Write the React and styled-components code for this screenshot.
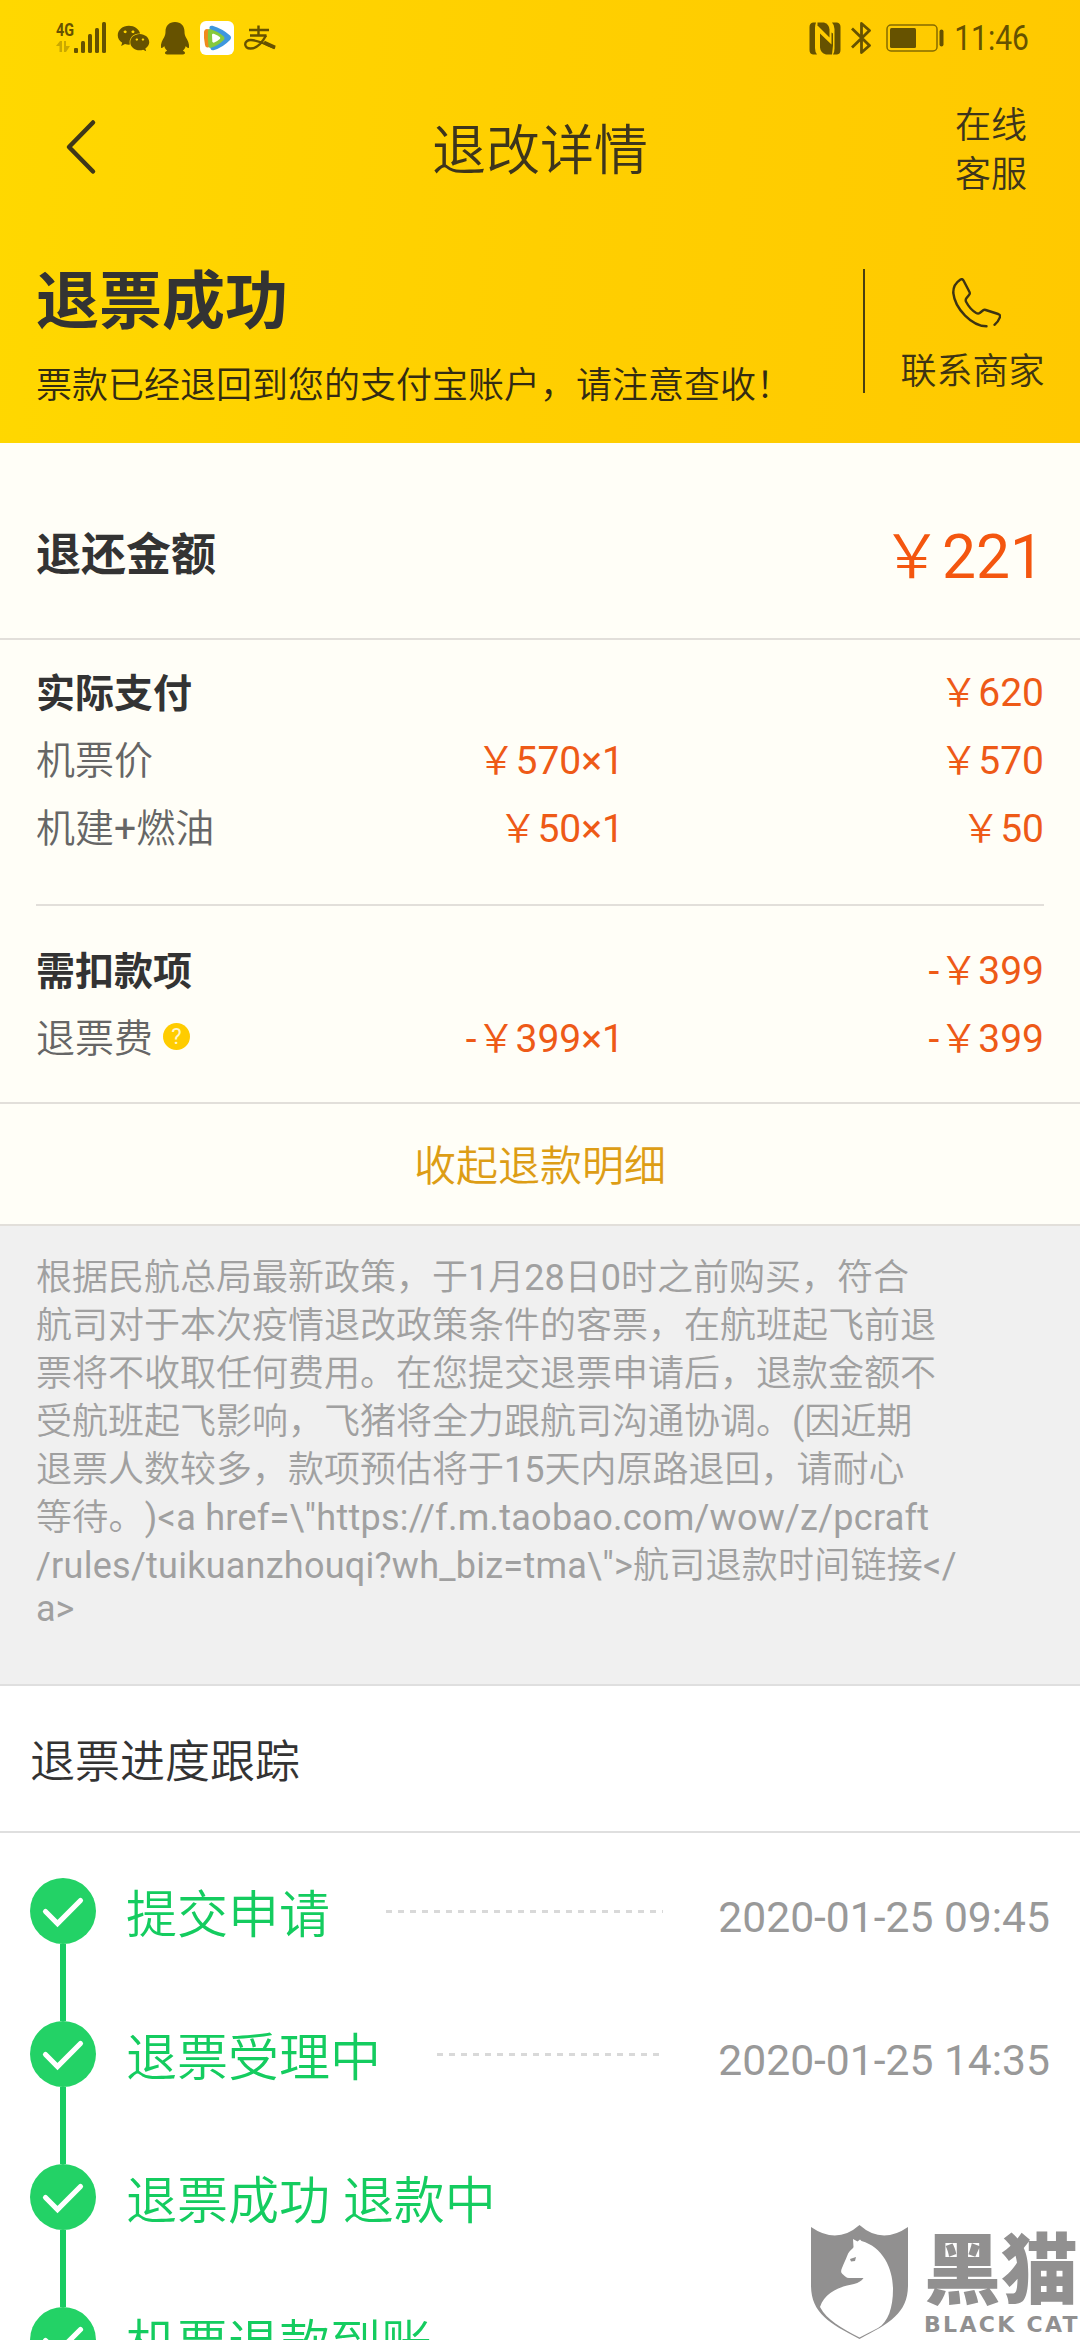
import React from 'react';
import styled, { createGlobalStyle } from 'styled-components';
import { FaWeixin } from 'react-icons/fa';

const GlobalStyle = createGlobalStyle`
  * {
    box-sizing: border-box;
  }

  body {
    margin: 0;
    background-color: #fff;
    font-family: Roboto, 'Noto Sans CJK SC DemiLight', 'Noto Sans CJK SC', sans-serif;
    font-weight: 400;
    text-spacing-trim: space-all;
    color: #333;
  }
`;

// Styled components
const Screen = styled.div`
  position: relative;
  width: 1080px;
  height: 2340px;
  overflow: hidden;
`;

const Hero = styled.header`
  height: 443px;
  background: linear-gradient(96deg, #ffd800 0%, #ffcf00 50%, #ffc900 100%);
`;

const StatusBar = styled.div`
  display: flex;
  justify-content: space-between;
  height: 76px;
  padding: 0 51px 0 56px;
  color: #665200;
`;

const StatusGroup = styled.div`
  display: flex;
  align-items: center;

  svg {
    display: block;
  }
`;

const StatusIcon = styled.span`
  display: flex;
  margin-left: ${(props) => props.$left || 0}px;
`;

const Clock = styled.span`
  display: flex;
  justify-content: flex-end;
  width: 73px;
  margin-left: 12px;
  font-size: 34.5px;
  line-height: 77px;

  span {
    transform: scaleX(0.87);
    transform-origin: right center;
  }
`;

const TitleBar = styled.div`
  display: grid;
  grid-template-columns: 200px 1fr 200px;
  align-items: center;
  height: 146px;
`;

const BackButton = styled.button`
  display: flex;
  padding: 0 0 4px 64px;
  border: none;
  background: none;
`;

const PageTitle = styled.h1`
  margin: 0;
  padding-top: 5px;
  font-size: 54px;
  font-weight: 400;
  line-height: 80px;
  text-align: center;
  color: #3d351c;
`;

const ServiceLink = styled.a`
  width: 72px;
  margin-left: 75px;
  padding-top: 4px;
  font-size: 36px;
  line-height: 49px;
  color: #3d351c;
`;

const StatusPanel = styled.div`
  display: flex;
  height: 221px;
  padding-left: 36px;
`;

const StatusText = styled.div`
  width: 827px;
  padding-top: 29px;
`;

const StatusTitle = styled.h2`
  margin: 0;
  font-family: 'Noto Sans CJK SC', sans-serif;
  font-size: 63px;
  font-weight: 700;
  line-height: 90px;
  color: #333;
`;

const StatusMessage = styled.p`
  margin: 20px 0 0;
  font-size: 36px;
  line-height: 50px;
  color: #332b12;
`;

const Contact = styled.a`
  display: flex;
  flex-direction: column;
  align-items: center;
  width: 217px;
  height: 124px;
  margin-top: 47px;
  padding-top: 9px;
  border-left: 2px solid #4a3f10;
  font-size: 36px;
  line-height: 50px;
  color: #3d3413;

  svg {
    flex-shrink: 0;
    margin: 0 0 19px 6px;
  }
`;

const Amounts = styled.section`
  background-color: #fffef7;
`;

const RefundTotal = styled.div`
  display: flex;
  justify-content: space-between;
  align-items: center;
  height: 197px;
  padding: 21px 36px 0;
  border-bottom: 2px solid #e2dfda;
`;

const TotalLabel = styled.span`
  font-family: 'Noto Sans CJK SC', sans-serif;
  font-size: 45px;
  font-weight: 700;
`;

const TotalValue = styled.span`
  font-size: 60.5px;
  color: #f4560f;
`;

const FeeGroup = styled.div`
  height: ${(props) => props.$height}px;
  padding-top: ${(props) => props.$top}px;
  margin: 0 36px;
  border-bottom: ${(props) => (props.$last ? 'none' : '2px solid #e2dfda')};
`;

const FeeRow = styled.div`
  display: grid;
  grid-template-columns: 220px 368px 1fr;
  align-items: center;
  height: 68px;
  font-size: 39px;
  line-height: 68px;
`;

const FeeLabel = styled.span`
  display: flex;
  align-items: center;
  margin-top: ${(props) => (props.$bold ? -7 : 0)}px;
  font-family: ${(props) => (props.$bold ? "'Noto Sans CJK SC', sans-serif" : 'inherit')};
  font-weight: ${(props) => (props.$bold ? 700 : 400)};
  color: ${(props) => (props.$bold ? '#333' : '#666')};
`;

const FeeValue = styled.span`
  text-align: right;
  color: #ee5a17;
`;

const HelpBadge = styled.span`
  width: 27px;
  height: 27px;
  margin: -6px 0 0 10px;
  border-radius: 50%;
  background-color: #fc0;
  font-size: 22px;
  line-height: 27px;
  text-align: center;
  color: #fff6d0;
`;

const CollapseButton = styled.button`
  display: block;
  width: 100%;
  height: 124px;
  padding: 0;
  border: solid #e2dfda;
  border-width: 2px 0;
  background-color: #fffef7;
  font-family: inherit;
  font-size: 42px;
  line-height: 125px;
  color: #dd9d15;
`;

const Notice = styled.section`
  height: 460px;
  padding: 28px 36px 0;
  border-bottom: 2px solid #dfdfdf;
  background-color: #f0f0f0;
  font-size: 36px;
  color: #a0a0a0;
`;

const NoticeLine = styled.div`
  height: 48px;
  line-height: 48px;
  white-space: nowrap;

  /* lines that carry the raw link markup */
  &:nth-child(6),
  &:nth-child(7) {
    letter-spacing: 0.26px;
  }

  &:last-child {
    line-height: 39px;
  }
`;

const TrackTitle = styled.h3`
  height: 147px;
  margin: 0;
  padding-left: 30px;
  border-bottom: 2px solid #dfdfdf;
  font-size: 45px;
  font-weight: 400;
  line-height: 153px;
`;

const Timeline = styled.ol`
  margin: 0;
  padding: 45px 30px 0;
  list-style: none;
`;

const Step = styled.li`
  display: flex;
  height: 143px;
`;

const StepMarker = styled.div`
  display: flex;
  flex-direction: column;
  align-items: center;
  width: 66px;
  margin-right: 30px;

  svg {
    flex-shrink: 0;
  }
`;

const StepLine = styled.div`
  flex: 1;
  width: 6px;
  background-color: #18cc62;
`;

const StepBody = styled.div`
  display: flex;
  flex: 1;
  align-items: center;
  height: 66px;
`;

const StepName = styled.span`
  padding-top: 9px;
  font-size: 51px;
  line-height: 66px;
  white-space: nowrap;
  color: #14cc5f;
`;

const Dashes = styled.div`
  flex: 1;
  height: 3px;
  margin: 0 55px 0 56px;
  background: repeating-linear-gradient(90deg, #d9d9d9 0 6px, transparent 6px 12px);
`;

const StepTime = styled.time`
  padding-top: 12px;
  font-size: 42.6px;
  white-space: nowrap;
  color: #999;
`;

// Brand mark that floats over the lower right corner
const Watermark = styled.div`
  position: absolute;
  right: 0;
  bottom: 0;
  display: flex;
  align-items: flex-end;
  width: 269px;
  height: 116px;
  color: #919090;
`;

const WatermarkText = styled.div`
  width: 155px;
  height: 116px;
  margin-left: 16px;
`;

const WatermarkName = styled.div`
  height: 88px;
  font-family: 'Noto Sans CJK SC', sans-serif;
  font-size: 77px;
  font-weight: 900;
  line-height: 82px;
  white-space: nowrap;
`;

const WatermarkLatin = styled.div`
  font-family: 'DejaVu Sans', sans-serif;
  font-size: 22px;
  font-weight: 700;
  line-height: 26px;
  letter-spacing: 2.3px;
  white-space: nowrap;
`;

const paid = [
  { label: '实际支付', total: '￥620', bold: true },
  { label: '机票价', unit: '￥570×1', total: '￥570' },
  { label: '机建+燃油', unit: '￥50×1', total: '￥50' },
];

const deducted = [
  { label: '需扣款项', total: '-￥399', bold: true },
  { label: '退票费', unit: '-￥399×1', total: '-￥399', help: true },
];

const noticeLines = [
  '根据民航总局最新政策，于1月28日0时之前购买，符合',
  '航司对于本次疫情退改政策条件的客票，在航班起飞前退',
  '票将不收取任何费用。在您提交退票申请后，退款金额不',
  '受航班起飞影响，飞猪将全力跟航司沟通协调。(因近期',
  '退票人数较多，款项预估将于15天内原路退回，请耐心',
  '等待。)<a href=\\"https://f.m.taobao.com/wow/z/pcraft',
  '/rules/tuikuanzhouqi?wh_biz=tma\\">航司退款时间链接</',
  'a>',
];

const steps = [
  { name: '提交申请', time: '2020-01-25 09:45' },
  { name: '退票受理中', time: '2020-01-25 14:35' },
  { name: '退票成功 退款中' },
  { name: '机票退款到账' },
];

const SignalIcon = () => (
  <svg width="52" height="54" viewBox="0 -10 52 54" fill="currentColor">
    <text x="0" y="15" fontSize="19" fontWeight="700" textLength="18" lengthAdjust="spacingAndGlyphs">4G</text>
    <path d="M0 25l4-5h2v11H3.500v-6zM8 20h2v5l4 0-4 6H8z" opacity="0.35" />
    <rect x="18" y="27" width="4" height="5" rx="1" />
    <rect x="25" y="20" width="4" height="12" rx="1.500" />
    <rect x="32" y="13" width="4" height="19" rx="1.500" />
    <rect x="39" y="7" width="4" height="25" rx="1.500" />
    <rect x="46" y="1" width="4" height="31" rx="1.500" />
  </svg>
);

const PenguinIcon = () => (
  <svg width="30" height="34" viewBox="0 0 30 34" fill="currentColor">
    <path d="M15 1c6 0 9.500 4 9.500 9.500 0 2 .3 3.500 1.200 5.500 2 3.500 3.800 6.500 3.300 10.500-.8 1.500-2.500-.5-3.200-1.500-.6 2-1.600 3.600-3 4.800 1.500.6 2.200 1.200 2.200 2.200 0 1-1.500 1.500-4 1.500H9c-2.500 0-4-.5-4-1.500s.7-1.600 2.200-2.200c-1.400-1.200-2.400-2.800-3-4.800-.7 1-2.400 3-3.200 1.500C.500 22.500 2.300 19.500 4.300 16c.9-2 1.200-3.500 1.200-5.500C5.500 5 9 1 15 1z" />
  </svg>
);

const VideoIcon = () => (
  <svg width="34" height="34" viewBox="0 0 34 34">
    <rect width="34" height="34" rx="6" fill="#fff" />
    <path d="M9.500 6q1-1.800 3-1.200 10 3 17.500 9.700 2 2.200 0 4.500-7 7.500-16.500 10.200-2 .5-3-1.500z" fill="#3d97de" />
    <path d="M4 11q.5-3 3-3l5 1v16l-4 1.500q-2.500.3-3-2.500Q3.500 17 4 11z" fill="#f08a1c" />
    <path d="M8 9.500q.3-1.800 2.200-1.300 7.800 2 13.300 7 2 2 0 4-5.500 5.500-12.500 7.600-2 .5-2.500-1.500Q7.400 17 8 9.500z" fill="#86c93c" />
    <path d="M12 14q0-1.800 1.800-1.200 3.400 1.200 6 3.200 1 1 0 2-2.500 2.200-5.500 3.500-1.700.6-2-1.200z" fill="#fff" />
  </svg>
);

const AlipayIcon = () => (
  <svg width="32" height="26" viewBox="0 0 32 26" fill="none" stroke="currentColor" strokeWidth="2.400">
    <path d="M5 5h20M14.500.5v10M6 10.500h16.500" />
    <path d="M22 10.500C18.500 17 13 23.500 6.500 23.500 3 23.500 1.200 21.500 1.200 19.300c0-2.600 2.300-4.300 5.600-4.300C13.500 15 22 19.500 31 23" />
    <path d="M20 17.500l11 5" strokeWidth="3.600" />
  </svg>
);

const NfcIcon = () => (
  <svg width="32" height="33" viewBox="0 0 32 33" fill="currentColor">
    <path d="M4 .500h3Q6 3 6 6v20q0 4 2 6.500H4Q.500 32 .500 28V5Q.500 1 4 .500z" />
    <path d="M8.500.500h6.500q5 1.500 5.500 7v8L8.500 3.500z" />
    <path d="M23 .500h5Q31.500 1 31.500 5v23q0 4-3.500 4.500h-4q1.500-2.500 1.500-6V7q0-4-2.500-6.500z" />
    <path d="M11 11.500l11.500 11v-12l1.500 1v12l-1 9h-6q-5.500-1.500-6-7z" />
  </svg>
);

const BluetoothIcon = () => (
  <svg width="20" height="34" viewBox="0 0 20 34" fill="none" stroke="currentColor" strokeWidth="2.800" strokeLinejoin="round">
    <path d="M1 7.500l17.500 17-8 7V2.500l8 7L1 26.500" />
  </svg>
);

const BatteryIcon = () => (
  <svg width="58" height="28" viewBox="0 0 58 28" fill="currentColor">
    <rect x="1" y="1" width="50" height="26" rx="4" fill="none" stroke="currentColor" strokeWidth="1.500" opacity="0.8" />
    <rect x="4" y="4" width="26" height="20" rx="1.500" />
    <rect x="53.500" y="5.500" width="4" height="17" rx="2" />
  </svg>
);

const PhoneIcon = () => (
  <svg width="50" height="50" viewBox="0 0 50 50" fill="none" stroke="currentColor" strokeWidth="2.400" strokeLinecap="round" strokeLinejoin="round">
    <path d="M35.500 48.300C21 48 4 31 2.300 15 2 8.500 5 4.500 9.500 1.500q2-1 3 1l6 11.500q.8 1.600-.5 3l-2.800 3.500q-1 1.600 0 3.500 4 7.500 10 11 2 1 3.500 0l3.500-2.700q1-.8 2.500-.3l12.500 4q2.500 1 1.700 3.300-1.400 4-5.400 7.500" />
  </svg>
);

const CheckIcon = () => (
  <svg width="66" height="66" viewBox="0 0 66 66">
    <circle cx="33" cy="33" r="33" fill="#23d266" />
    <path d="M15.500 33.500L27.500 45.500 50.500 22.500" fill="none" stroke="#fff" strokeWidth="5.200" strokeLinecap="round" />
  </svg>
);

const CatShield = () => (
  <svg width="97" height="115" viewBox="0 0 97 115">
    <path d="M0 2Q26 20 48.500 0 71 20 97 2v58c0 28-18 38-48.500 54C18 98 0 88 0 60z" fill="#919090" />
    <path d="M42 14l4.500 2.500L49 14.500 50.500 16C72 22 82 44 82 64c0 19-5 33-15 39l-18.500 9.500C30 103 16 95 9 82 14 66 32 61 43 59q7-2 9.500-6H38c-3 0-4-2-6-3.500-2-1.500-2.500-3-1-6.500 2-5 3.500-8 5.500-13 2-5 5.500-6 6-8z" fill="#fff" />
    <path d="M39 34l6-2-1 4-4 .5z" fill="#919090" />
  </svg>
);

const FeeRows = ({ rows }) =>
  rows.map((row) => (
    <FeeRow key={row.label}>
      <FeeLabel $bold={row.bold}>
        {row.label}
        {row.help && <HelpBadge>?</HelpBadge>}
      </FeeLabel>
      <FeeValue>{row.unit}</FeeValue>
      <FeeValue>{row.total}</FeeValue>
    </FeeRow>
  ));

const Header = () => (
  <Hero>
    <StatusBar>
      <StatusGroup>
        <SignalIcon />
        <StatusIcon $left={9}><FaWeixin size={33} /></StatusIcon>
        <StatusIcon $left={10}><PenguinIcon /></StatusIcon>
        <StatusIcon $left={10}><VideoIcon /></StatusIcon>
        <StatusIcon $left={10}><AlipayIcon /></StatusIcon>
      </StatusGroup>
      <StatusGroup>
        <NfcIcon />
        <StatusIcon $left={10}><BluetoothIcon /></StatusIcon>
        <StatusIcon $left={15}><BatteryIcon /></StatusIcon>
        <Clock><span>11:46</span></Clock>
      </StatusGroup>
    </StatusBar>
    <TitleBar>
      <BackButton>
        <svg width="34" height="56" viewBox="0 0 34 56" fill="none" stroke="#3f3719" strokeWidth="4.500" strokeLinecap="round" strokeLinejoin="round">
          <path d="M29 3.500L5 28l24 24.500" />
        </svg>
      </BackButton>
      <PageTitle>退改详情</PageTitle>
      <ServiceLink>在线客服</ServiceLink>
    </TitleBar>
    <StatusPanel>
      <StatusText>
        <StatusTitle>退票成功</StatusTitle>
        <StatusMessage>票款已经退回到您的支付宝账户，请注意查收！</StatusMessage>
      </StatusText>
      <Contact>
        <PhoneIcon />
        联系商家
      </Contact>
    </StatusPanel>
  </Hero>
);

const App = () => {
  return (
    <Screen>
      <GlobalStyle />
      <Header />
      <Amounts>
        <RefundTotal>
          <TotalLabel>退还金额</TotalLabel>
          <TotalValue>￥221</TotalValue>
        </RefundTotal>
        <FeeGroup $height={266} $top={19}>
          <FeeRows rows={paid} />
        </FeeGroup>
        <FeeGroup $height={196} $top={31} $last>
          <FeeRows rows={deducted} />
        </FeeGroup>
        <CollapseButton>收起退款明细</CollapseButton>
      </Amounts>
      <Notice>
        {noticeLines.map((line) => (
          <NoticeLine key={line}>{line}</NoticeLine>
        ))}
      </Notice>
      <TrackTitle>退票进度跟踪</TrackTitle>
      <Timeline>
        {steps.map((step) => (
          <Step key={step.name}>
            <StepMarker>
              <CheckIcon />
              <StepLine />
            </StepMarker>
            <StepBody>
              <StepName>{step.name}</StepName>
              {step.time && <Dashes />}
              {step.time && <StepTime>{step.time}</StepTime>}
            </StepBody>
          </Step>
        ))}
      </Timeline>
      <Watermark>
        <CatShield />
        <WatermarkText>
          <WatermarkName>黑猫</WatermarkName>
          <WatermarkLatin>BLACK CAT</WatermarkLatin>
        </WatermarkText>
      </Watermark>
    </Screen>
  );
};

export default App;
